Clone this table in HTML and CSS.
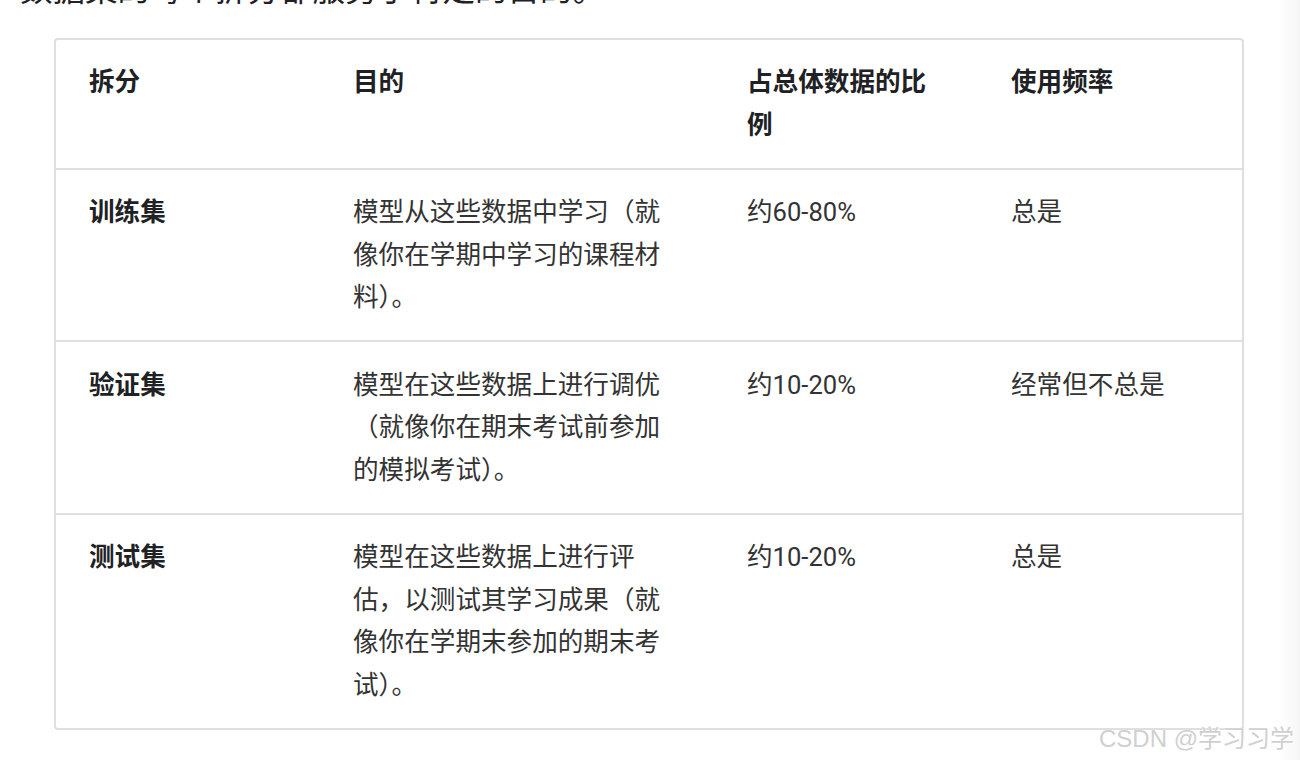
FILE: index.html
```html
<!DOCTYPE html>
<html lang="zh-CN">
<head>
<meta charset="utf-8">
<title>数据集拆分</title>
<link rel="stylesheet" href="styles.css">
</head>
<body>
<div class="page">
  <p class="intro">数据集的每个拆分都服务于特定的目的。</p>
  <table class="splits">
    <colgroup>
      <col class="c1"><col class="c2"><col class="c3"><col class="c4">
    </colgroup>
    <thead>
      <tr>
        <th>拆分</th>
        <th>目的</th>
        <th>占总体数据的比例</th>
        <th>使用频率</th>
      </tr>
    </thead>
    <tbody>
      <tr>
        <th>训练集</th>
        <td>模型从这些数据中学习（就像你在学期中学习的课程材料）。</td>
        <td>约60-80%</td>
        <td>总是</td>
      </tr>
      <tr>
        <th>验证集</th>
        <td>模型在这些数据上进行调优（就像你在期末考试前参加的模拟考试）。</td>
        <td>约10-20%</td>
        <td>经常但不总是</td>
      </tr>
      <tr>
        <th>测试集</th>
        <td>模型在这些数据上进行评估，以测试其学习成果（就像你在学期末参加的期末考试）。</td>
        <td>约10-20%</td>
        <td>总是</td>
      </tr>
    </tbody>
  </table>
</div>
<div class="watermark">CSDN @学习习学</div>
</body>
</html>
```

FILE: styles.css
```css
html, body {
  margin: 0;
  padding: 0;
}
body {
  width: 1300px;
  height: 760px;
  overflow: hidden;
  background: linear-gradient(to right, #ffffff 0, #ffffff 1278px, #f6f6f6 1300px);
  font-family: "Roboto", "Noto Sans CJK SC", sans-serif;
  color: #333333;
}
.page {
  padding-left: 54px;
}
.intro {
  margin: -30px 0 27.5px -34px;
  font-size: 32.5px;
  line-height: 40px;
  color: #202124;
  white-space: nowrap;
}
.splits {
  width: 1190px;
  table-layout: fixed;
  border-collapse: separate;
  border-spacing: 0;
  border: 2px solid #dfdfdf;
  border-radius: 4px;
  font-size: 25.6px;
  line-height: 42.5px;
}
.c1 { width: 264px; }
.c2 { width: 394px; }
.c3 { width: 264px; }
.c4 { width: 264px; }
.splits th,
.splits td {
  padding: 21.5px 33px;
  text-align: left;
  vertical-align: top;
}
.splits th {
  font-weight: 700;
  color: #202124;
}
.splits td {
  font-weight: 400;
  color: #333333;
}
.splits tbody th,
.splits tbody td {
  border-top: 2px solid #dfdfdf;
}
.watermark {
  position: absolute;
  right: 6px;
  top: 724px;
  font-family: "Liberation Sans", "Noto Sans CJK SC", sans-serif;
  font-size: 24px;
  line-height: 30px;
  color: #d0d0d0;
  text-shadow: 0 0 1px #ffffff, 1px 1px 1px #ffffff;
}
```
